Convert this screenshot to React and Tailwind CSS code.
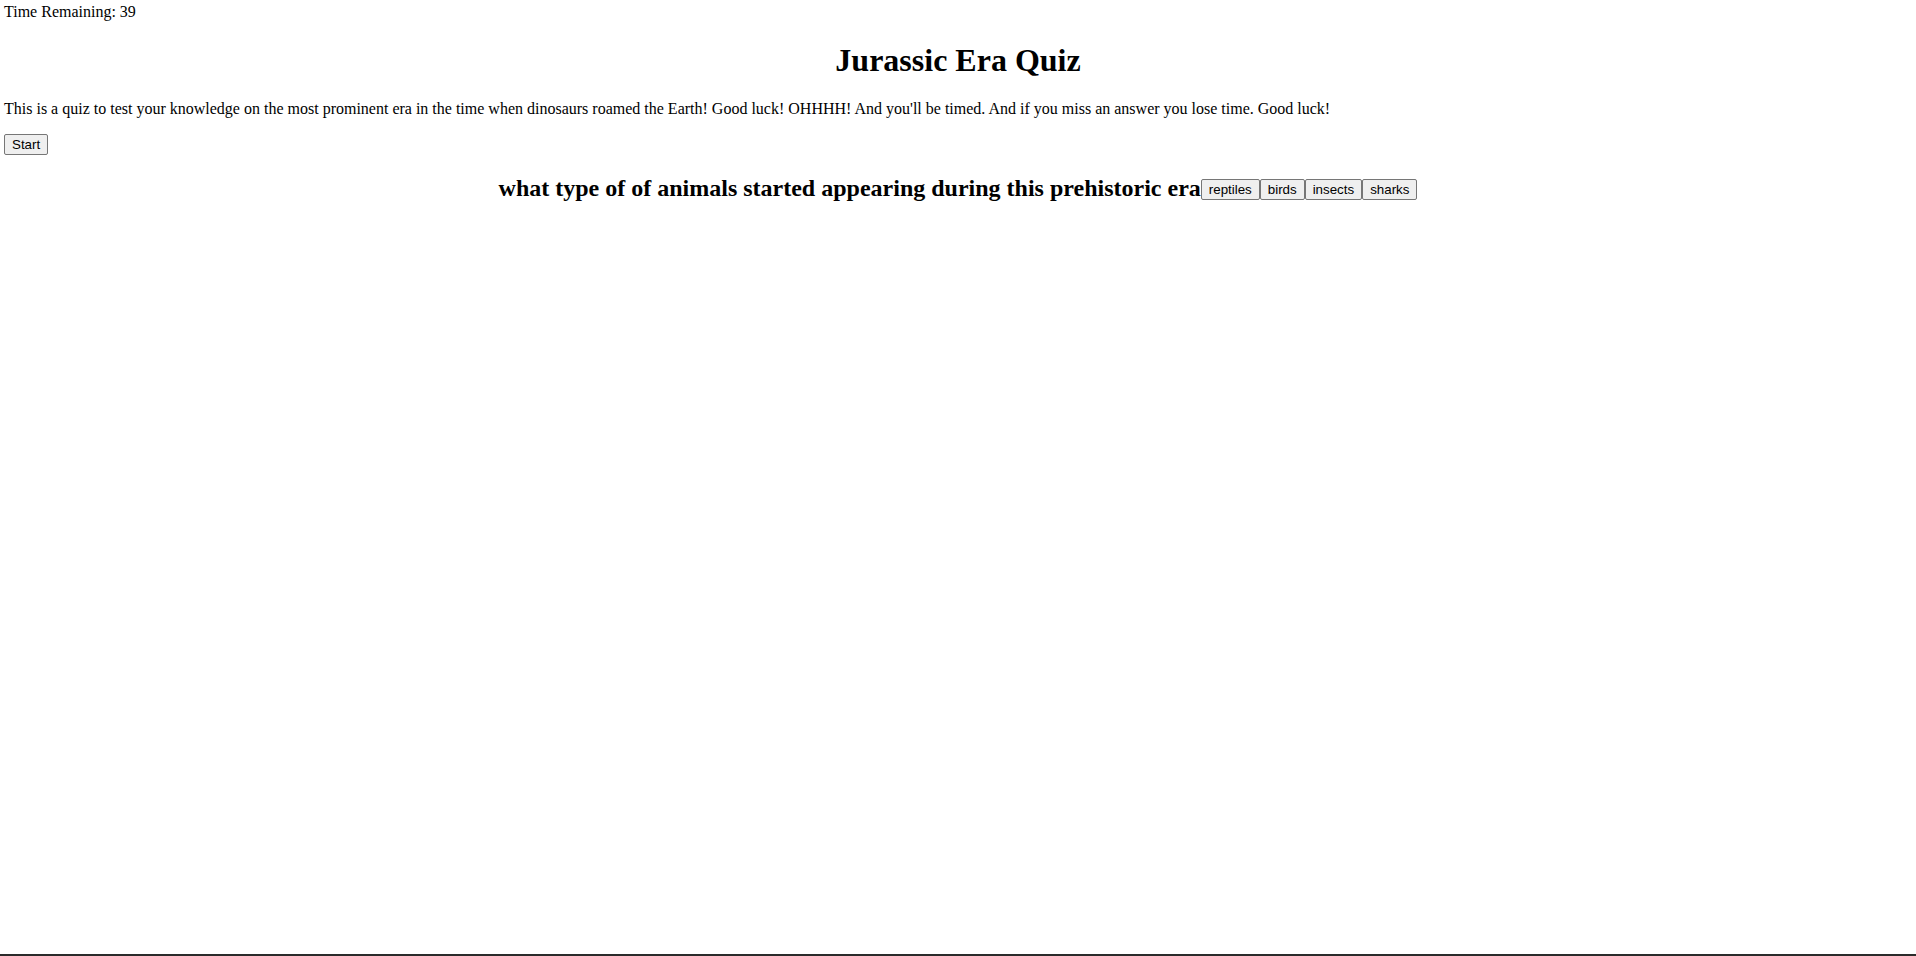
import React, { useState } from "react";

const answers = ["reptiles", "birds", "insects", "sharks"];

const btn =
  "font-['Liberation_Sans',Arial,sans-serif] text-[13.333px] font-normal leading-[normal] text-black bg-[#efefef] border border-[#767676] rounded-[2px] px-[7px] py-[2px] hover:bg-[#e5e5e5]";

const App = () => {
  const [timeLeft] = useState(39);

  return (
    <div className="min-h-screen border-b-2 border-[#2b2b2b] bg-white px-1 pt-[3px] font-['Liberation_Serif','Times_New_Roman',serif] leading-[normal] text-black text-[16px]">
      <div>Time Remaining: {timeLeft}</div>

      <h1 className="text-center text-[32px] font-bold mt-[21.44px] mb-[20.5px]">Jurassic Era Quiz</h1>

      <p className="my-4">
        This is a quiz to test your knowledge on the most prominent era in the time when dinosaurs roamed the Earth!
        Good luck! OHHHH! And you'll be timed. And if you miss an answer you lose time. Good luck!
      </p>

      <button className={`${btn} align-baseline`}>Start</button>

      <h2 className="text-center text-[24px] font-bold my-[19.92px]">
        what type of of animals started appearing during this prehistoric era
        {answers.map((a) => (
          <button key={a} className={`${btn} align-[2px]`}>
            {a}
          </button>
        ))}
      </h2>
    </div>
  );
};

export default App;
